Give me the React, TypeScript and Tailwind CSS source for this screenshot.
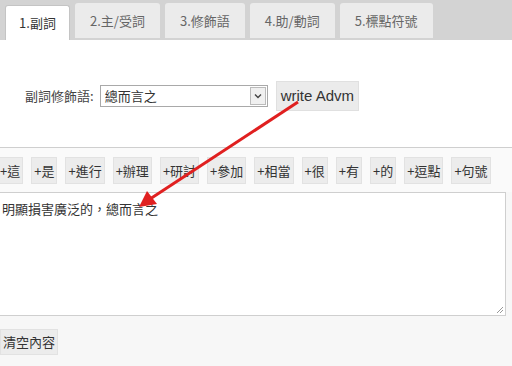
import React from "react";

const font = { fontFamily: '"Noto Sans CJK TC", "Noto Sans", sans-serif' };

const tabs = ["1.副詞", "2.主/受詞", "3.修飾語", "4.助/動詞", "5.標點符號"];
const words = ["+這", "+是", "+進行", "+辦理", "+研討", "+參加", "+相當", "+很", "+有", "+的", "+逗點", "+句號"];

export default function App() {
  return (
    <div className="relative w-[512px] h-[366px] overflow-hidden bg-[#f7f7f7] text-[#333]" style={font}>
      <div className="flex items-end gap-[5px] h-[40px] bg-[#d3d3d3] pl-[5px]">
        {tabs.map((t, i) => (
          <div
            key={t}
            className={
              "h-[35px] flex items-center justify-center rounded-t-[3px] text-[13px] " +
              (i === 0
                ? "bg-white text-[#333] w-[65px] border border-b-0 border-[#c4c4c4]"
                : "bg-[#ebebeb] text-[#666] px-[15px] mb-[2px] h-[33px]")
            }
          >
            {t}
          </div>
        ))}
      </div>
      <div className="bg-white h-[108px] border-b border-[#cfcfcf] flex items-center pl-[25px] pt-[4px]">
        <span className="text-[13px] text-[#444]">副詞修飾語:</span>
        <div className="ml-[6px] w-[168px] h-[22px] border border-[#a9a9a9] bg-white flex items-center justify-between text-[13px]">
          <span className="pl-[4px] text-[#333]">總而言之</span>
          <span className="w-[16px] h-[18px] mr-[1px] border border-[#bbb] bg-[#f0f0f0] flex items-center justify-center">
            <svg width="8" height="6" viewBox="0 0 8 6"><path d="M1 1.5 L4 4.5 L7 1.5" stroke="#444" strokeWidth="1.4" fill="none" /></svg>
          </span>
        </div>
        <button className="ml-[8px] h-[30px] px-[4px] bg-[#ebebeb] border border-[#e0e0e0] text-[15px] text-[#333] leading-none" style={{ fontFamily: '"Liberation Sans", sans-serif' }}>
          write Advm
        </button>
      </div>
      <div className="bg-[#fafafa] flex gap-[8px] ml-[-3px] pt-[9px] pb-[8px]">
        {words.map((w) => (
          <button key={w} className="h-[27px] px-[2px] bg-[#ececec] border border-[#e2e2e2] text-[13px] text-[#333] leading-none whitespace-nowrap">
            {w}
          </button>
        ))}
      </div>
      <div className="ml-[-2px] w-[508px] h-[124px] bg-white border border-[#cfcfcf] relative text-[13px] px-[3px] pt-[6px] text-[#333]">
        明顯損害廣泛的，總而言之
        <svg className="absolute right-[1px] bottom-[1px]" width="9" height="9" viewBox="0 0 9 9">
          <path d="M8 2 L2 8 M8 5 L5 8" stroke="#999" strokeWidth="1" />
        </svg>
      </div>
      <div className="pt-[12px]">
        <button className="h-[26px] px-[2px] bg-[#ececec] border border-[#e2e2e2] text-[13px] text-[#333] leading-none">清空內容</button>
      </div>
      <svg className="absolute left-0 top-0 pointer-events-none" width="512" height="366" viewBox="0 0 512 366">
        <line x1="298" y1="102" x2="150" y2="199" stroke="#e02020" strokeWidth="3" />
        <polygon points="139,207 147,191 157,204" fill="#e02020" />
      </svg>
    </div>
  );
}
